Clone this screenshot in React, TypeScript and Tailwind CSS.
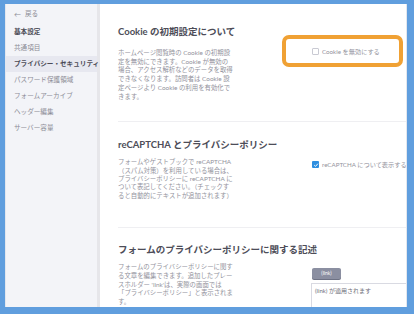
const navItems = [
  { label: "基本設定", strong: true },
  { label: "共通項目" },
  { label: "プライバシー・セキュリティ", strong: true, active: true },
  { label: "パスワード保護領域" },
  { label: "フォームアーカイブ" },
  { label: "ヘッダー編集" },
  { label: "サーバー容量" },
]

const cookieText = [
  "ホームページ閲覧時の Cookie の初期設",
  "定を無効にできます。Cookie が無効の",
  "場合、アクセス解析などのデータを取得",
  "できなくなります。訪問者は Cookie 設",
  "定ページより Cookie の利用を有効化で",
  "きます。",
]

const recaptchaText = [
  "フォームやゲストブックで reCAPTCHA",
  "（スパム対策）を利用している場合は、",
  "プライバシーポリシーに reCAPTCHA に",
  "ついて表記してください。（チェックす",
  "ると自動的にテキストが追加されます）",
]

const policyText = [
  "フォームのプライバシーポリシーに関す",
  "る文章を編集できます。追加したプレー",
  "スホルダー 'link'は、実際の画面では",
  "「プライバシーポリシー」と表示されま",
  "す。",
]

const font = "font-['Lato','Noto_Sans_CJK_JP',sans-serif]"

function Checkbox({ checked }: { checked?: boolean }) {
  if (checked) {
    return (
      <span className="w-[7px] h-[7px] rounded-[1px] bg-[#2f8fe0] flex items-center justify-center shrink-0">
        <svg viewBox="0 0 10 10" className="w-[6px] h-[6px]">
          <path d="M2 5.2 L4.2 7.3 L8.2 2.8" fill="none" stroke="white" strokeWidth="1.6" />
        </svg>
      </span>
    )
  }
  return <span className="w-[7px] h-[7px] rounded-[1px] border border-[#c9cad3] bg-white shrink-0" />
}

function Lines({ lines, leading }: { lines: string[]; leading: string }) {
  return (
    <p className={`w-[118px] shrink-0 text-[6.4px] whitespace-nowrap ${leading}`}>
      {lines.map((l) => (
        <span key={l} className="block">
          {l}
        </span>
      ))}
    </p>
  )
}

export default function App() {
  return (
    <div className={`relative w-[414px] h-[314px] bg-[#609ede] pt-[4px] pl-[5px] pr-[7px] pb-[7px] ${font}`}>
      <div className="flex h-full overflow-hidden bg-white border-l border-r border-[#e3e7ee]">
        {/* Sidebar */}
        <aside className="w-[94px] shrink-0 bg-[#f3f4f8] border-r-[3px] border-[#e6e6ea] pt-[2px]">
          <div className="h-[16px] flex items-center gap-[4px] pl-[8px] text-[6.6px] text-[#8c8c96]">
            <span className="text-[7px]">←</span>
            <span>戻る</span>
          </div>
          <div className="mt-[2px]">
            {navItems.map((item) => (
              <div
                key={item.label}
                className={`h-[16px] flex items-center pl-[8px] whitespace-nowrap text-[6.6px] ${
                  item.active ? "bg-[#e7e8f0]" : ""
                } ${item.strong ? "font-bold text-[#4b4b56]" : "text-[#8c8c96]"}`}
              >
                {item.label}
              </div>
            ))}
          </div>
        </aside>

        {/* Main */}
        <main className="flex-1 min-w-0 pl-[18px] pt-[22px] text-[#92929c]">
          <section>
            <h2 className="text-[9.5px] leading-[12px] font-bold text-[#4d4d58] whitespace-nowrap">
              Cookie の初期設定について
            </h2>
            <div className="flex mt-[11px]">
              <Lines lines={cookieText} leading="leading-[8.7px]" />
              <label className="ml-[76px] -mt-[1px] h-[7px] flex items-center gap-[3px] whitespace-nowrap text-[6.2px]">
                <Checkbox />
                <span>Cookie を無効にする</span>
              </label>
            </div>
          </section>

          <div className="mt-[20px] h-px bg-[#efeff2]" />

          <section className="mt-[17px]">
            <h2 className="text-[9.5px] leading-[12px] font-bold text-[#4d4d58] whitespace-nowrap">
              reCAPTCHA とプライバシーポリシー
            </h2>
            <div className="flex mt-[7px]">
              <Lines lines={recaptchaText} leading="leading-[8.4px]" />
              <label className="ml-[76px] mt-[3px] h-[7px] flex items-center gap-[3px] whitespace-nowrap text-[6.2px]">
                <Checkbox checked />
                <span>reCAPTCHA について表示する</span>
              </label>
            </div>
          </section>

          <div className="mt-[27px] h-px bg-[#efeff2]" />

          <section className="mt-[16px]">
            <h2 className="text-[9.5px] leading-[12px] font-bold text-[#4d4d58] whitespace-nowrap">
              フォームのプライバシーポリシーに関する記述
            </h2>
            <div className="flex mt-[7px]">
              <Lines lines={policyText} leading="leading-[8.7px]" />
              <div className="ml-[76px] -mt-[6px] w-[120px] shrink-0">
                <button className="w-[29px] h-[11px] rounded-[2px] bg-[#8b8fa1] text-white text-[5px] leading-[11px] shadow-[0_1px_0_#6e7284]">
                  (link)
                </button>
                <div className="mt-[2px] -ml-[1px] h-[40px] border border-[#d9dae2] px-[3px] pt-[2px] text-[6px] text-[#6e6e78] whitespace-nowrap">
                  (link) が適用されます
                </div>
              </div>
            </div>
          </section>
        </main>
      </div>

      {/* Annotation highlight */}
      <div className="absolute left-[282px] top-[35px] w-[121px] h-[32px] rounded-[7px] border-[4px] border-[#f0a134]" />
    </div>
  )
}
